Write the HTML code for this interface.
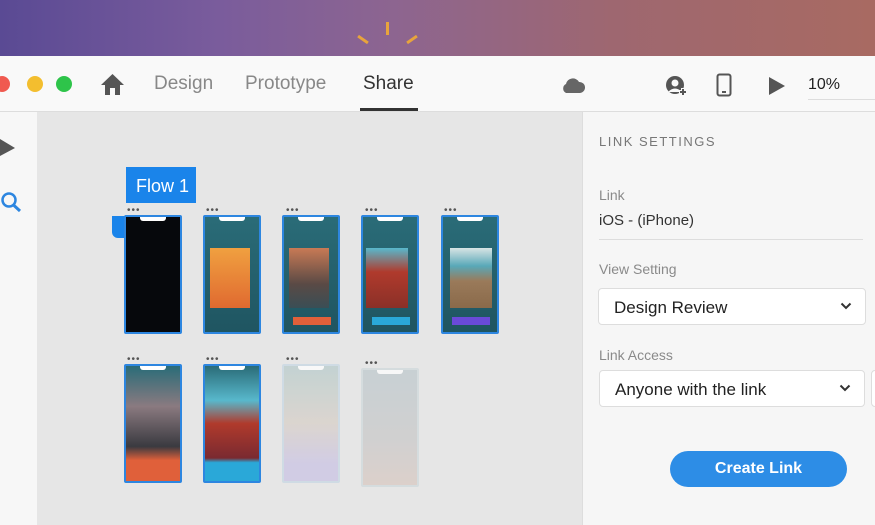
<!DOCTYPE html>
<html><head><meta charset="utf-8"><style>
*{margin:0;padding:0;box-sizing:border-box}
body{width:875px;height:525px;overflow:hidden;position:relative;font-family:"Liberation Sans",sans-serif;background:#e6e6e6}
.abs{position:absolute}
.top{left:0;top:0;width:875px;height:56px;background:linear-gradient(90deg,#5a4a94 0%,#7a5c9c 25%,#8d6590 45%,#9e6770 70%,#a86a62 100%)}
.bar{left:0;top:56px;width:875px;height:56px;background:#f9f9f9;border-bottom:1px solid #ddd}
.dot{width:16px;height:16px;border-radius:50%;top:76px}
.tab{top:73px;font-size:19px;color:#888}
.side{left:0;top:112px;width:37px;height:413px;background:#f7f7f7}
.panel{left:582px;top:112px;width:293px;height:413px;background:#f6f6f6;border-left:1px solid #ddd}
.ph{width:58px;height:119px;border:2px solid #2d86e0;border-radius:2px;overflow:hidden}
.ph .notch{position:absolute;left:14px;top:0;width:26px;height:4px;background:#fff;border-radius:0 0 3px 3px}
.dots{font-size:10px;color:#555;letter-spacing:1px;line-height:6px}
.lbl{font-size:14px;color:#8a8a8a}
.sel{background:#fff;border:1px solid #ddd;border-radius:4px;height:37px;font-size:17px;color:#222;padding:9px 0 0 15px}
.chev{position:absolute;right:13px;top:13px}
</style></head><body>
<div class="abs top"></div>
<div class="abs" style="left:386px;top:22px;width:3px;height:13px;background:#e8a43c"></div>
<div class="abs" style="left:357px;top:38px;width:12px;height:3px;background:#e8a43c;transform:rotate(35deg)"></div>
<div class="abs" style="left:406px;top:38px;width:12px;height:3px;background:#e8a43c;transform:rotate(-35deg)"></div>
<div class="abs bar"></div>
<div class="abs dot" style="left:-6px;background:#f05a50"></div>
<div class="abs dot" style="left:27px;background:#f3be2f"></div>
<div class="abs dot" style="left:56px;background:#2ec44a"></div>
<svg class="abs" style="left:100px;top:73px" width="25" height="23" viewBox="0 0 25 23"><path d="M12.5 1 L24 12 H20 V22 H15 V15 H10 V22 H5 V12 H1 Z" fill="#555"/></svg>
<div class="abs tab" style="left:154px">Design</div>
<div class="abs tab" style="left:245px">Prototype</div>
<div class="abs tab" style="left:363px;color:#333">Share</div>
<div class="abs" style="left:360px;top:108px;width:58px;height:3px;background:#333"></div>
<svg class="abs" style="left:560px;top:76px" width="26" height="18" viewBox="0 0 26 18"><path d="M6 17 A5 5 0 0 1 6 8 A7 7 0 0 1 19 6 A5.5 5.5 0 0 1 20 17 Z" fill="#666"/></svg>
<svg class="abs" style="left:664px;top:74px" width="26" height="24" viewBox="0 0 26 24"><circle cx="11" cy="11" r="9" fill="#555"/><circle cx="11" cy="9" r="3.5" fill="#f9f9f9"/><path d="M4 18 Q11 11 18 18" fill="#f9f9f9"/><path d="M19 14v8M15 18h8" stroke="#f9f9f9" stroke-width="4"/><path d="M19 15v6M16 18h6" stroke="#555" stroke-width="2"/></svg>
<svg class="abs" style="left:716px;top:73px" width="16" height="24" viewBox="0 0 16 24"><rect x="1.5" y="1.5" width="13" height="21" rx="2" fill="none" stroke="#555" stroke-width="2"/><rect x="6" y="18" width="4" height="2" fill="#555"/></svg>
<svg class="abs" style="left:767px;top:76px" width="20" height="20" viewBox="0 0 20 20"><path d="M2 1 L18 10 L2 19 Z" fill="#555"/></svg>
<div class="abs" style="left:808px;top:76px;font-size:16px;color:#222">10%</div>
<div class="abs" style="left:808px;top:99px;width:67px;height:1px;background:#ddd"></div>
<div class="abs side"></div>
<svg class="abs" style="left:0;top:137px" width="16" height="22" viewBox="0 0 16 22"><path d="M0 2 L15 11 L0 19 Z" fill="#555"/></svg>
<svg class="abs" style="left:0;top:190px" width="22" height="24" viewBox="0 0 22 24"><circle cx="9" cy="10" r="6.5" fill="none" stroke="#2d86e0" stroke-width="2.5"/><path d="M13.5 15 L20 21" stroke="#2d86e0" stroke-width="3"/></svg>

<div class="abs" style="left:126px;top:167px;width:70px;height:36px;background:#1a84ea;color:#fff;font-size:18px;padding:9px 0 0 10px">Flow 1</div>
<div class="abs" style="left:112px;top:216px;width:16px;height:22px;background:#1a84ea;border-radius:0 0 0 6px"></div>

<div class="abs dots" style="left:127px;top:208px">•••</div>
<div class="abs dots" style="left:206px;top:208px">•••</div>
<div class="abs dots" style="left:286px;top:208px">•••</div>
<div class="abs dots" style="left:365px;top:208px">•••</div>
<div class="abs dots" style="left:444px;top:208px">•••</div>
<div class="abs dots" style="left:127px;top:357px">•••</div>
<div class="abs dots" style="left:206px;top:357px">•••</div>
<div class="abs dots" style="left:286px;top:357px">•••</div>
<div class="abs dots" style="left:365px;top:361px">•••</div>

<div class="abs ph" style="left:124px;top:215px;background:#06080c"><div class="notch"></div></div>
<div class="abs ph" style="left:203px;top:215px;background:linear-gradient(#2a6c78,#1f5561)"><div class="notch"></div><div class="abs" style="left:5px;top:31px;width:40px;height:60px;background:linear-gradient(#f0a040,#e06a30)"></div></div>
<div class="abs ph" style="left:282px;top:215px;background:linear-gradient(#2a6c78,#1f5561)"><div class="notch"></div><div class="abs" style="left:5px;top:31px;width:40px;height:60px;background:linear-gradient(#c87a55,#5a4a45 60%,#3a4e55)"></div><div class="abs" style="left:9px;top:100px;width:38px;height:8px;background:#e0603a"></div></div>
<div class="abs ph" style="left:361px;top:215px;background:linear-gradient(#2a6c78,#1f5561)"><div class="notch"></div><div class="abs" style="left:3px;top:31px;width:42px;height:60px;background:linear-gradient(#58b8cc,#b03a2c 40%,#8a3028)"></div><div class="abs" style="left:9px;top:100px;width:38px;height:8px;background:#2aa8d8"></div></div>
<div class="abs ph" style="left:441px;top:215px;background:linear-gradient(#2a6c78,#1f5561)"><div class="notch"></div><div class="abs" style="left:7px;top:31px;width:42px;height:60px;background:linear-gradient(#d8e4e4,#58a8b8 30%,#9a7a5a 55%,#8a6a4a)"></div><div class="abs" style="left:9px;top:100px;width:38px;height:8px;background:#6a4ad8"></div></div>

<div class="abs ph" style="left:124px;top:364px;background:linear-gradient(#2a6c78,#8a7a80 35%,#3a3a40 70%,#e0603a 82%)"><div class="notch"></div></div>
<div class="abs ph" style="left:203px;top:364px;background:linear-gradient(#2a6c78,#58b8cc 30%,#b03a2c 50%,#7a2a30 80%,#2aa8d8 84%)"><div class="notch"></div></div>
<div class="abs ph" style="left:282px;top:364px;border-color:#c8d8e4;background:linear-gradient(#b8cccc,#d8d0c8 50%,#cbc4e4 85%);opacity:.75"><div class="notch"></div></div>
<div class="abs ph" style="left:361px;top:368px;border-color:#cfd8dc;background:linear-gradient(#bcc8cc,#c8c8c8 60%,#d8c8c0);opacity:.7"><div class="notch"></div></div>

<div class="abs panel"></div>
<div class="abs" style="left:599px;top:134px;font-size:13px;letter-spacing:1.5px;color:#777">LINK SETTINGS</div>
<div class="abs lbl" style="left:599px;top:187px">Link</div>
<div class="abs" style="left:599px;top:212px;font-size:15px;color:#333">iOS - (iPhone)</div>
<div class="abs" style="left:599px;top:239px;width:264px;height:1px;background:#ddd"></div>
<div class="abs lbl" style="left:599px;top:261px">View Setting</div>
<div class="abs sel" style="left:598px;top:288px;width:268px">Design Review<svg class="chev" width="12" height="8" viewBox="0 0 12 8"><path d="M1.5 1.5 L6 6 L10.5 1.5" fill="none" stroke="#333" stroke-width="2"/></svg></div>
<div class="abs lbl" style="left:599px;top:347px">Link Access</div>
<div class="abs sel" style="left:599px;top:370px;width:266px">Anyone with the link<svg class="chev" width="12" height="8" viewBox="0 0 12 8"><path d="M1.5 1.5 L6 6 L10.5 1.5" fill="none" stroke="#333" stroke-width="2"/></svg></div>
<div class="abs" style="left:871px;top:370px;width:10px;height:37px;border:1px solid #ddd;border-radius:4px;background:#fff"></div>
<div class="abs" style="left:670px;top:451px;width:177px;height:36px;border-radius:18px;background:#2d8de6;color:#fff;font-size:16px;font-weight:bold;text-align:center;line-height:36px">Create Link</div>
</body></html>
